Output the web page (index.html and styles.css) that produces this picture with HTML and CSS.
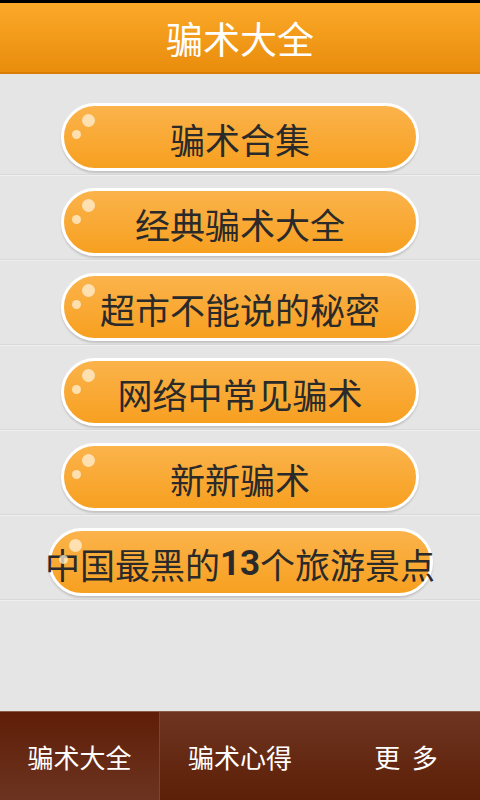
FILE: index.html
```html
<!DOCTYPE html>
<html lang="zh-CN">
<head>
    <meta charset="UTF-8">
    <title>骗术大全</title>
    <link rel="stylesheet" href="styles.css">
</head>
<body>
    <div class="page">
        <div class="status"></div>
        <div class="header">骗术大全</div>

        <ul class="menu">
            <li><div class="btn">骗术合集</div></li>
            <li><div class="btn">经典骗术大全</div></li>
            <li><div class="btn">超市不能说的秘密</div></li>
            <li><div class="btn">网络中常见骗术</div></li>
            <li><div class="btn">新新骗术</div></li>
            <li><div class="btn wide">中国最黑的<b>13</b>个旅游景点</div></li>
        </ul>

        <div class="tabs">
            <div class="tab on">骗术大全</div>
            <div class="tab">骗术心得</div>
            <div class="tab">更&nbsp;&nbsp;多</div>
        </div>
    </div>
</body>
</html>
```

FILE: styles.css
```css
*{
    box-sizing: border-box;
}
body{
    margin: 0;
    background: #e5e5e5;
    font-family: "Noto Sans CJK SC", "Noto Sans", sans-serif;
}
.page{
    height: 800px;
    display: flex;
    flex-direction: column;
}
.status{
    height: 3px;
    background: #000;
}
.header{
    height: 71px;
    line-height: 70px;
    text-align: center;
    color: #fff;
    font-size: 37px;
    background: linear-gradient(#fca92a, #e98c0b);
    border-bottom: 2px solid #d97c05;
}
.menu{
    list-style: none;
    margin: 0;
    padding: 16px 0 0;
    flex: 1;
}
.menu li{
    height: 85px;
    padding-top: 13px;
    border-bottom: 1px solid #d9d9d9;
    box-shadow: 0 1px 0 #efefef;
    display: flex;
    justify-content: center;
}
.btn{
    position: relative;
    width: 358px;
    height: 68px;
    padding-top: 3px;
    line-height: 60px;
    text-align: center;
    white-space: nowrap;
    font-size: 35px;
    color: #2a2a2a;
    border: 3px solid #fff;
    border-radius: 34px;
    background: linear-gradient(#fbb34b, #f7a020);
    box-shadow: 0 2px 2px rgba(0,0,0,0.15);
    display: flex;
    justify-content: center;
}
.btn::before,
.btn::after{
    content: "";
    position: absolute;
    border-radius: 50%;
    background: rgba(255,240,215,0.75);
}
.btn::before{
    width: 13px;
    height: 13px;
    left: 18px;
    top: 8px;
}
.btn::after{
    width: 9px;
    height: 9px;
    left: 8px;
    top: 24px;
}
.btn b{
    font-family: "Roboto", "Noto Sans", sans-serif;
    font-weight: 700;
}
.btn.wide{
    width: 385px;
}
.tabs{
    height: 89px;
    display: flex;
    border-top: 1px solid #8c5a46;
}
.tab{
    width: 160px;
    text-align: center;
    line-height: 90px;
    font-size: 26px;
    color: #fff;
    background: linear-gradient(#6f3521, #5c1f07);
}
.tab.on{
    background: linear-gradient(#5f1e07, #6c3420);
    border-right: 1px solid #7c4432;
}
.tab:last-child{
    padding-left: 12px;
}
```
